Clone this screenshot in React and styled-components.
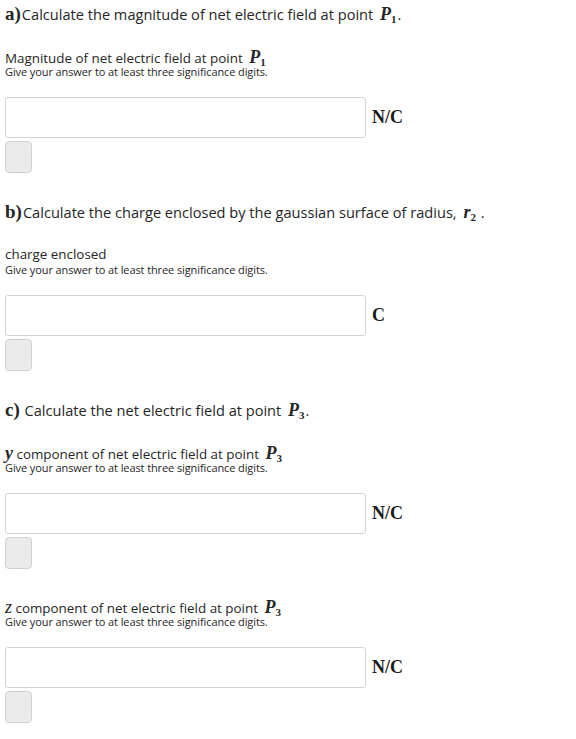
import React from 'react'
import styled, { createGlobalStyle } from 'styled-components'

const Global = createGlobalStyle`
  body {
    margin: 0;
    background: #fff;
    color: #262626;
    font-family: "Open Sans", "Noto Sans", sans-serif;
  }
`

const Page = styled.div`
  padding: 4px 5px;
`

const Part = styled.section`
  display: flex;
  flex-direction: column;
`

const Heading = styled.div`
  display: flex;
  align-items: baseline;
  white-space: pre;
  height: 20px;
  line-height: 20px;
  font-size: 14.6px;
  margin-bottom: 24px;
`

const Tag = styled.span`
  font-family: "Liberation Serif", "DejaVu Serif", serif;
  font-weight: bold;
  font-size: 19px;
  margin-right: 1px;
`

const MathVar = styled.span`
  font-family: "Liberation Serif", "DejaVu Serif", serif;
  font-style: italic;
  font-weight: ${p => (p.$bold ? 'bold' : 'normal')};
  font-size: 18px;
  line-height: 1;
  margin: ${p => (p.$tight ? '0' : '0 1px 0 3px')};
  sub {
    font-style: normal;
    font-weight: bold;
    font-size: 11px;
    vertical-align: -3px;
    line-height: 0;
  }
`

const Question = styled.div`
  display: flex;
  flex-direction: column;
  margin-bottom: 29px;
`

const Label = styled.div`
  font-size: 13.4px;
  line-height: 16px;
  height: 16px;
  white-space: pre;
`

const Hint = styled.div`
  font-size: 11px;
  line-height: 16px;
  height: 16px;
  letter-spacing: -0.1px;
  margin-bottom: 17px;
`

const AnswerRow = styled.div`
  display: flex;
  align-items: center;
  gap: 6px;
  margin-bottom: 3px;
`

const Input = styled.div`
  width: 359px;
  height: 39px;
  border: 1px solid #d4d4d4;
  border-radius: 3px;
  background: #fff;
`

const Unit = styled.span`
  font-family: "Liberation Serif", "DejaVu Serif", serif;
  font-weight: bold;
  font-size: 18px;
  color: #1a1a1a;
`

const CheckButton = styled.div`
  width: 25px;
  height: 30px;
  border: 1px solid #d2d2d2;
  border-radius: 4px;
  background: #ebebeb;
`

const hint = 'Give your answer to at least three significance digits.'

function Answer({ label, unit }) {
  return (
    <Question>
      <Label>{label}</Label>
      <Hint>{hint}</Hint>
      <AnswerRow>
        <Input />
        <Unit>{unit}</Unit>
      </AnswerRow>
      <CheckButton />
    </Question>
  )
}

const P = ({ n }) => (
  <MathVar $bold>P<sub>{n}</sub></MathVar>
)

export default function App() {
  return (
    <Page>
      <Global />
      <Part>
        <Heading>
          <Tag>a)</Tag>Calculate the magnitude of net electric field at point <P n="1" />.
        </Heading>
        <Answer label={<>Magnitude of net electric field at point <P n="1" /></>} unit="N/C" />
      </Part>
      <Part>
        <Heading>
          <Tag>b)</Tag>Calculate the charge enclosed by the gaussian surface of radius, <MathVar $bold>r<sub>2</sub></MathVar> .
        </Heading>
        <Answer label="charge enclosed" unit="C" />
      </Part>
      <Part>
        <Heading>
          <Tag>c)</Tag> Calculate the net electric field at point <P n="3" />.
        </Heading>
        <Answer label={<><MathVar $bold $tight>y</MathVar> component of net electric field at point <P n="3" /></>} unit="N/C" />
        <Answer label={<><MathVar $tight>z</MathVar> component of net electric field at point <P n="3" /></>} unit="N/C" />
      </Part>
    </Page>
  )
}
